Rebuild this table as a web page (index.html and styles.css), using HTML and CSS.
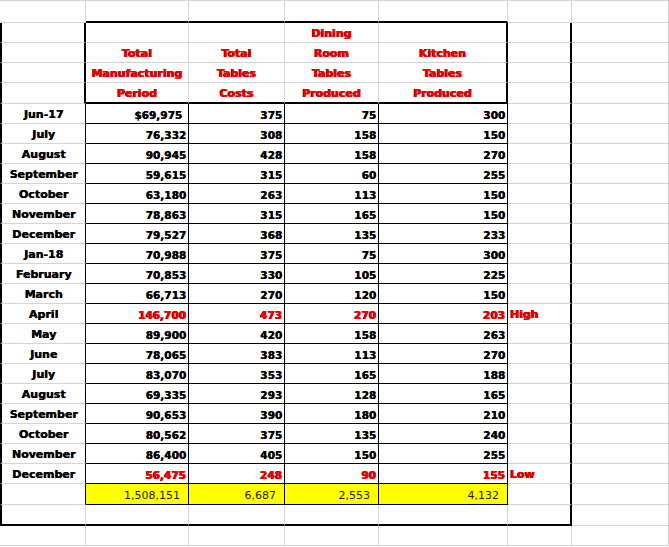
FILE: index.html
```html
<!DOCTYPE html>
<html>
<head>
<meta charset="utf-8">
<link rel="stylesheet" href="styles.css">
</head>
<body>
<div class="sheet">
  <!-- row 1 -->
  <div class="c"></div><div class="c tt"></div><div class="c tt"></div><div class="c tt"></div><div class="c tt"></div><div class="c"></div><div class="c"></div>
  <!-- header rows -->
  <div class="c ol hl"></div><div class="c hd"></div><div class="c hd"></div><div class="c hd">Dining</div><div class="c hd hr"></div><div class="c or"></div><div class="c"></div>
  <div class="c ol hl"></div><div class="c hd">Total</div><div class="c hd">Total</div><div class="c hd">Room</div><div class="c hd hr">Kitchen</div><div class="c or"></div><div class="c"></div>
  <div class="c ol hl"></div><div class="c hd">Manufacturing</div><div class="c hd">Tables</div><div class="c hd">Tables</div><div class="c hd hr">Tables</div><div class="c or"></div><div class="c"></div>
  <div class="c ol hl"></div><div class="c hd hb">Period</div><div class="c hd hb">Costs</div><div class="c hd hb">Produced</div><div class="c hd hb hr">Produced</div><div class="c or"></div><div class="c"></div>
  <!-- data rows -->
  <div class="c ol dl lab">Jun-17</div><div class="c d num acc">$69,975</div><div class="c d num">375</div><div class="c d num">75</div><div class="c d num">300</div><div class="c or"></div><div class="c"></div>
  <div class="c ol dl lab">July</div><div class="c d num">76,332</div><div class="c d num">308</div><div class="c d num">158</div><div class="c d num">150</div><div class="c or"></div><div class="c"></div>
  <div class="c ol dl lab">August</div><div class="c d num">90,945</div><div class="c d num">428</div><div class="c d num">158</div><div class="c d num">270</div><div class="c or"></div><div class="c"></div>
  <div class="c ol dl lab">September</div><div class="c d num">59,615</div><div class="c d num">315</div><div class="c d num">60</div><div class="c d num">255</div><div class="c or"></div><div class="c"></div>
  <div class="c ol dl lab">October</div><div class="c d num">63,180</div><div class="c d num">263</div><div class="c d num">113</div><div class="c d num">150</div><div class="c or"></div><div class="c"></div>
  <div class="c ol dl lab">November</div><div class="c d num">78,863</div><div class="c d num">315</div><div class="c d num">165</div><div class="c d num">150</div><div class="c or"></div><div class="c"></div>
  <div class="c ol dl lab">December</div><div class="c d num">79,527</div><div class="c d num">368</div><div class="c d num">135</div><div class="c d num">233</div><div class="c or"></div><div class="c"></div>
  <div class="c ol dl lab">Jan-18</div><div class="c d num">70,988</div><div class="c d num">375</div><div class="c d num">75</div><div class="c d num">300</div><div class="c or"></div><div class="c"></div>
  <div class="c ol dl lab">February</div><div class="c d num">70,853</div><div class="c d num">330</div><div class="c d num">105</div><div class="c d num">225</div><div class="c or"></div><div class="c"></div>
  <div class="c ol dl lab">March</div><div class="c d num">66,713</div><div class="c d num">270</div><div class="c d num">120</div><div class="c d num">150</div><div class="c or"></div><div class="c"></div>
  <div class="c ol dl lab">April</div><div class="c d num red">146,700</div><div class="c d num red">473</div><div class="c d num red">270</div><div class="c d num red">203</div><div class="c or note red">High</div><div class="c"></div>
  <div class="c ol dl lab">May</div><div class="c d num">89,900</div><div class="c d num">420</div><div class="c d num">158</div><div class="c d num">263</div><div class="c or"></div><div class="c"></div>
  <div class="c ol dl lab">June</div><div class="c d num">78,065</div><div class="c d num">383</div><div class="c d num">113</div><div class="c d num">270</div><div class="c or"></div><div class="c"></div>
  <div class="c ol dl lab">July</div><div class="c d num">83,070</div><div class="c d num">353</div><div class="c d num">165</div><div class="c d num">188</div><div class="c or"></div><div class="c"></div>
  <div class="c ol dl lab">August</div><div class="c d num">69,335</div><div class="c d num">293</div><div class="c d num">128</div><div class="c d num">165</div><div class="c or"></div><div class="c"></div>
  <div class="c ol dl lab">September</div><div class="c d num">90,653</div><div class="c d num">390</div><div class="c d num">180</div><div class="c d num">210</div><div class="c or"></div><div class="c"></div>
  <div class="c ol dl lab">October</div><div class="c d num">80,562</div><div class="c d num">375</div><div class="c d num">135</div><div class="c d num">240</div><div class="c or"></div><div class="c"></div>
  <div class="c ol dl lab">November</div><div class="c d num">86,400</div><div class="c d num">405</div><div class="c d num">150</div><div class="c d num">255</div><div class="c or"></div><div class="c"></div>
  <div class="c ol dl lab">December</div><div class="c d num red">56,475</div><div class="c d num red">248</div><div class="c d num red">90</div><div class="c d num red">155</div><div class="c or note red">Low</div><div class="c"></div>
  <!-- totals -->
  <div class="c ol dl"></div><div class="c d tot">1,508,151</div><div class="c d tot">6,687</div><div class="c d tot">2,553</div><div class="c d tot">4,132</div><div class="c or"></div><div class="c"></div>
  <!-- row 26 -->
  <div class="c ol ob"></div><div class="c ob"></div><div class="c ob"></div><div class="c ob"></div><div class="c ob"></div><div class="c or ob"></div><div class="c"></div>
  <!-- row 27 -->
  <div class="c"></div><div class="c"></div><div class="c"></div><div class="c"></div><div class="c"></div><div class="c"></div><div class="c"></div>
</div>
</body>
</html>
```

FILE: styles.css
```css
html, body {
  margin: 0;
  padding: 0;
  background: #ffffff;
}

.sheet {
  display: grid;
  grid-template-columns: 86px 103px 96px 94px 129px 64px 97px;
  grid-template-rows: 22px 20px 20px 20px 21px repeat(19, 20px) 21px 21px 20px;
  border-top: 1px solid #d4d4d4;
  width: 669px;
  font-family: "DejaVu Sans", sans-serif;
  color: #000;
}

.c {
  box-sizing: border-box;
  border-right: 1px solid #d4d4d4;
  border-bottom: 1px solid #d4d4d4;
  display: flex;
  align-items: center;
  padding: 2px 2px 0 2px;
  white-space: nowrap;
  overflow: visible;
  min-width: 0;
}

/* outer thick frame */
.ol { border-left: 2px solid #000; }
.or { border-right: 2px solid #000; }
.ob { border-bottom: 2px solid #000; }

/* header block thick frame */
.tt { border-bottom: 2px solid #000; }
.hl { border-right: 2px solid #000; }
.hr { border-right: 2px solid #000; }
.hb { border-bottom: 2px solid #000; }

/* data block thin black borders */
.dl { border-right: 1px solid #000; }
.d {
  border-right: 1px solid #000;
  border-bottom: 1px solid #000;
}

.hd {
  justify-content: center;
  font-weight: bold;
  font-size: 11px;
  padding-top: 1px;
  color: #ee0000;
  text-shadow: 0.5px 0 0 #ee0000, -0.5px 0.3px 0 #400000;
}

.lab {
  justify-content: center;
  font-weight: bold;
  font-size: 11px;
  text-shadow: 0.5px 0 0 #000;
}

.num {
  justify-content: flex-end;
  font-weight: bold;
  font-size: 10.5px;
  text-shadow: 0.5px 0 0 #000;
}

.acc { padding-right: 6px; }

.red {
  color: #ee0000;
  text-shadow: 0.5px 0 0 #ee0000, -0.5px 0.3px 0 #400000;
}

.note {
  font-weight: bold;
  font-size: 11px;
  justify-content: flex-start;
}

.tot {
  background: #ffff00;
  justify-content: flex-end;
  padding-right: 8px;
  font-size: 11px;
  color: #222;
}
```
